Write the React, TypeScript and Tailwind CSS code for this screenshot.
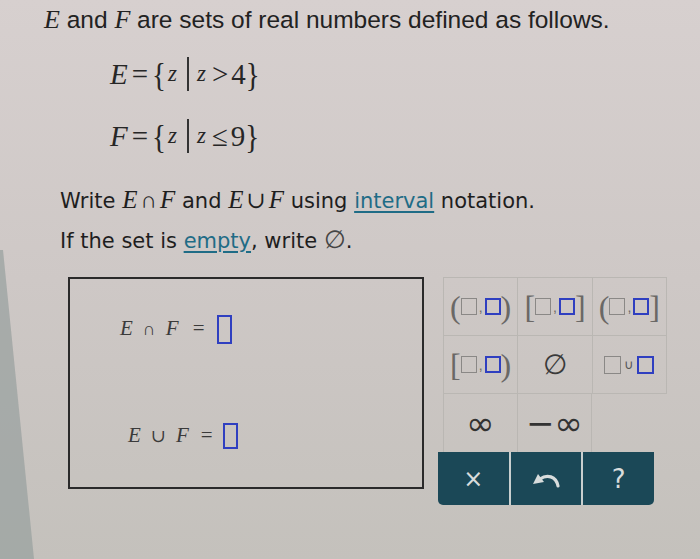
import React from "react";

const serif = { fontFamily: '"Liberation Serif", "DejaVu Serif", serif' };

function GrayBox({ w = 16, h = 17 }: { w?: number; h?: number }) {
  return (
    <span
      className="inline-block border-[1.5px] border-[#8a8886] align-middle"
      style={{ width: w, height: h }}
    />
  );
}
function BlueBox({ w = 16, h = 17 }: { w?: number; h?: number }) {
  return (
    <span
      className="inline-block border-2 border-[#2f3fc0] align-middle"
      style={{ width: w, height: h }}
    />
  );
}

function Interval({ l, r }: { l: string; r: string }) {
  return (
    <span className="flex items-center text-[#6a6866]">
      <span className="text-[32px] leading-none font-[300]" style={serif}>{l}</span>
      <GrayBox />
      <span className="text-[14px] mx-[2px] leading-none">,</span>
      <BlueBox />
      <span className="text-[32px] leading-none font-[300]" style={serif}>{r}</span>
    </span>
  );
}

function SetEq({ name, rel, num }: { name: string; rel: string; num: string }) {
  return (
    <div className="flex items-center text-[29px] leading-[30px] h-[30px] text-[#262626]">
      <i>{name}</i>
      <span className="mx-[4px]">=</span>
      <span className="font-[300] scale-y-[1.15] inline-block">{"{"}</span>
      <i className="text-[23px] mx-[2px]">z</i>
      <span className="inline-block w-[2px] h-[34px] bg-[#333] mx-[8px]" />
      <i className="text-[23px] mr-[3px]">z</i>
      <span className="mx-[3px]">{rel}</span>
      <span>{num}</span>
      <span className="font-[300] scale-y-[1.15] inline-block">{"}"}</span>
    </div>
  );
}

export default function App() {
  const mathI = "text-[25px]";
  return (
    <div
      className="relative w-[700px] h-[559px] overflow-hidden bg-gradient-to-b from-[#d7d0cf] via-[#cec8c6] to-[#c4c1bc] text-[#222]"
      style={{ fontFamily: '"Liberation Sans", Arial, sans-serif' }}
    >
      <div className="pl-[44px] pt-[5px]">
        <p className="text-[24.5px] leading-[30px] text-[#222]">
          <i style={serif} className="text-[26px]">E</i> and{" "}
          <i style={serif} className="text-[26px]">F</i> are sets of real numbers defined as follows.
        </p>

        <div className="pl-[66px] mt-[24px] flex flex-col gap-[32px]" style={serif}>
          <SetEq name="E" rel=">" num="4" />
          <SetEq name="F" rel="≤" num="9" />
        </div>

        <div
          className="pl-[16px] mt-[36px] text-[21px] leading-[26px] text-[#1e1e1e]"
          style={{ fontFamily: '"DejaVu Sans", Verdana, sans-serif' }}
        >
          <p>
            Write <i style={serif} className={mathI}>E</i>
            <span style={serif} className="mx-[3px] text-[23px]">∩</span>
            <i style={serif} className={mathI}>F</i> and{" "}
            <i style={serif} className={mathI}>E</i>
            <span style={serif} className="mx-[3px] text-[23px]">∪</span>
            <i style={serif} className={mathI}>F</i> using{" "}
            <span className="text-[#1f6c86] underline underline-offset-[3px]">interval</span> notation.
          </p>
          <p className="mt-[13px]">
            If the set is{" "}
            <span className="text-[#1f6c86] underline underline-offset-[3px]">empty</span>, write{" "}
            <span className="text-[25px] text-[#444]" style={serif}>∅</span>.
          </p>
        </div>
      </div>

      <div className="flex items-start pl-[68px] mt-[23px]">
        {/* answer box */}
        <div className="w-[356px] h-[212px] border-2 border-[#2a2a2a] flex flex-col text-[#3a3a3a]" style={serif}>
          <div className="flex items-center pl-[50px] mt-[35px] h-[30px] text-[21px]">
            <i>E</i>
            <span className="mx-[10px] text-[18px]">∩</span>
            <i>F</i>
            <span className="ml-[14px] mr-[12px]">=</span>
            <BlueBox w={15} h={29} />
          </div>
          <div className="flex items-center pl-[58px] mt-[78px] h-[28px] text-[21px]">
            <i>E</i>
            <span className="mx-[10px] text-[18px]">∪</span>
            <i>F</i>
            <span className="ml-[12px] mr-[10px]">=</span>
            <BlueBox w={15} h={26} />
          </div>
        </div>

        {/* keypad */}
        <div className="ml-[19px] w-[224px] flex flex-col">
          <div className="grid grid-cols-3 border-t border-l border-[#bab7b3]">
            <div className="h-[58px] border-r border-b border-[#bab7b3] flex items-center justify-center">
              <Interval l="(" r=")" />
            </div>
            <div className="h-[58px] border-r border-b border-[#bab7b3] flex items-center justify-center">
              <Interval l="[" r="]" />
            </div>
            <div className="h-[58px] border-r border-b border-[#bab7b3] flex items-center justify-center">
              <Interval l="(" r="]" />
            </div>
            <div className="h-[58px] border-r border-b border-[#bab7b3] flex items-center justify-center">
              <Interval l="[" r=")" />
            </div>
            <div className="h-[58px] border-r border-b border-[#bab7b3] flex items-center justify-center">
              <span className="text-[28px] text-[#3a3a3a]" style={serif}>∅</span>
            </div>
            <div className="h-[58px] border-r border-b border-[#bab7b3] flex items-center justify-center gap-[3px]">
              <GrayBox w={17} h={18} />
              <span className="text-[13px] text-[#555]">∪</span>
              <BlueBox w={17} h={18} />
            </div>
          </div>
          <div className="grid grid-cols-3">
            <div className="h-[58px] border-l border-r border-[#bab7b3] flex items-center justify-center">
              <span className="text-[34px] leading-none text-[#333]" style={{ fontFamily: '"DejaVu Sans", sans-serif' }}>∞</span>
            </div>
            <div className="h-[58px] border-r border-[#bab7b3] flex items-center justify-center">
              <span className="text-[34px] leading-none text-[#333]" style={{ fontFamily: '"DejaVu Sans", sans-serif' }}>−∞</span>
            </div>
            <div />
          </div>
          <div className="-ml-[5px] w-[216px] h-[53px] bg-[#1b4857] rounded-b-[5px] flex text-[#d8dcdc]">
            <div className="flex-1 flex items-center justify-center border-r-2 border-[#c9cfcf]">
              <span className="text-[24px] leading-none" style={{ fontFamily: '"DejaVu Sans", sans-serif' }}>×</span>
            </div>
            <div className="flex-1 flex items-center justify-center border-r-2 border-[#c9cfcf]">
              <svg width="34" height="20" viewBox="0 0 34 20">
                <path d="M29 17 C27 7, 18 5, 11 10" fill="none" stroke="#d8dcdc" strokeWidth="3.2" strokeLinecap="round" />
                <polygon points="4,15 9,5 15,13" fill="#d8dcdc" />
              </svg>
            </div>
            <div className="flex-1 flex items-center justify-center">
              <span className="text-[26px] leading-none" style={{ fontFamily: '"DejaVu Sans", sans-serif' }}>?</span>
            </div>
          </div>
        </div>
      </div>

      <svg className="absolute left-0 top-0 pointer-events-none" width="700" height="559">
        <polygon points="0,250 3,250 34,559 0,559" fill="#97a09e" opacity="0.7" />
      </svg>
    </div>
  );
}
